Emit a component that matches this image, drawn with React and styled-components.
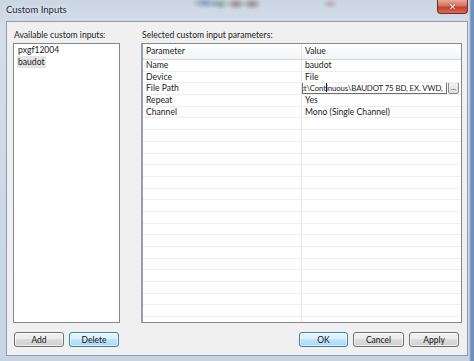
import React from 'react';
import styled, { createGlobalStyle } from 'styled-components';

const GlobalStyle = createGlobalStyle`
    html, body {
        margin: 0;
        padding: 0;
        background: #5a7fb5;
    }
    * {
        box-sizing: border-box;
    }
`;

const params = [
    { name: 'Name', value: 'baudot' },
    { name: 'Device', value: 'File' },
    { name: 'File Path', value: null },
    { name: 'Repeat', value: 'Yes' },
    { name: 'Channel', value: 'Mono (Single Channel)' },
];

const EMPTY_ROWS = 19;

// #region Styles

const Window = styled.div`
    width: 474px;
    height: 361px;
    padding: 0 6px 5px 6px;
    display: flex;
    flex-direction: column;
    font-family: Lato, "Open Sans", sans-serif;
    font-size: 8.6px;
    color: #1b1b1b;
    background:
        radial-gradient(ellipse 14px 6px at 205px 3px, rgba(60, 90, 140, 0.45), transparent),
        radial-gradient(ellipse 10px 6px at 220px 4px, rgba(60, 110, 80, 0.45), transparent),
        radial-gradient(ellipse 10px 6px at 236px 4px, rgba(110, 80, 60, 0.55), transparent),
        radial-gradient(ellipse 10px 6px at 252px 4px, rgba(110, 80, 60, 0.55), transparent),
        radial-gradient(ellipse 8px 5px at 330px 4px, rgba(150, 110, 120, 0.4), transparent),
        linear-gradient(90deg, transparent 469px, #6f90bf 471px),
        linear-gradient(180deg, #cbd6e3 0%, #d4dee9 8%, #c6d4e4 100%);
`;

const TitleBar = styled.div`
    height: 21px;
    flex: none;
    display: flex;
    align-items: flex-start;
    justify-content: space-between;
    .title {
        padding-top: 4px;
        font-size: 9.5px;
        color: #1e2b3a;
        text-shadow: 0 0 6px rgba(255, 255, 255, 0.9);
    }
`;

const CloseButton = styled.div`
    width: 31px;
    height: 14px;
    border: 1px solid #7a2a22;
    border-top: none;
    border-radius: 0 0 4px 4px;
    background: linear-gradient(180deg, #e9a99b 0%, #d7705e 45%, #c0422f 55%, #d86b4f 100%);
    display: flex;
    align-items: center;
    justify-content: center;
    color: #fff;
    font-size: 9px;
    font-weight: 700;
    font-family: "DejaVu Sans", sans-serif;
    text-shadow: 0 0 2px #5a1a10;
`;

const Client = styled.div`
    flex: 1;
    min-height: 0;
    background: #f0f0f0;
    border: 1px solid #8d9cb0;
    padding: 8px 5px 8px 6px;
    display: flex;
    gap: 21px;
`;

const Column = styled.div`
    display: flex;
    flex-direction: column;
    min-height: 0;
    width: ${(p) => p.$width || 'auto'};
    flex: ${(p) => (p.$grow ? 1 : 'none')};
`;

const Label = styled.div`
    height: 13px;
    line-height: 10px;
    padding-left: 1px;
`;

const ListBox = styled.div`
    flex: 1;
    min-height: 0;
    background: #fff;
    border: 1px solid #828790;
    padding: 0 3px;
`;

const ListItem = styled.div`
    height: 12px;
    line-height: 12px;
    padding: 0 1px;
    width: fit-content;
    background: ${(p) => (p.$selected ? '#e3e3e3' : 'transparent')};
`;

const ButtonRow = styled.div`
    display: flex;
    flex: none;
    gap: 5px;
    margin-top: 9px;
    justify-content: ${(p) => (p.$right ? 'flex-end' : 'flex-start')};
    padding: ${(p) => (p.$right ? '0 3px 0 0' : '0 0 0 1px')};
`;

const Button = styled.div`
    width: ${(p) => p.$width}px;
    height: 15px;
    border: 1px solid ${(p) => (p.$default ? '#3c7fb1' : '#707070')};
    border-radius: 3px;
    display: flex;
    align-items: center;
    justify-content: center;
    font-size: 8.5px;
    color: #111;
    box-shadow: inset 0 0 0 1px rgba(255, 255, 255, 0.65);
    background: ${(p) =>
        p.$default
            ? 'linear-gradient(180deg, #eaf6fd 0%, #d9f0fc 45%, #bee6fd 50%, #a7d9f5 100%)'
            : 'linear-gradient(180deg, #f2f2f2 0%, #ebebeb 45%, #dddddd 50%, #cfcfcf 100%)'};
`;

const Grid = styled.div`
    flex: 1;
    min-height: 0;
    background: #fff;
    border: 1px solid #828790;
    border-left: 2px solid #9a9ea5;
    overflow: hidden;
`;

const GridRow = styled.div`
    display: grid;
    grid-template-columns: 159px 1fr;
    height: ${(p) => (p.$header ? 16 : 11.7)}px;
    line-height: ${(p) => (p.$header ? 15 : 11)}px;
    border-bottom: 1px solid ${(p) => (p.$header ? '#d5d5d5' : '#eeeeee')};
    background: ${(p) => (p.$header ? 'linear-gradient(180deg, #ffffff 0%, #f3f4f6 100%)' : '#fff')};
`;

const Cell = styled.div`
    padding-left: 3px;
    white-space: nowrap;
    overflow: hidden;
    border-right: ${(p) => (p.$first ? '1px solid #e4e4e4' : 'none')};
`;

const EditBox = styled.div`
    display: flex;
    align-items: stretch;
    height: 12px;
    margin: -1px 2px 0 -3px;
    .field {
        flex: 1;
        min-width: 0;
        border: 1px solid #6e6e6e;
        background: #fff;
        overflow: hidden;
        white-space: nowrap;
        line-height: 10px;
        font-size: 7.8px;
        letter-spacing: -0.1px;
    }
    .text {
        display: inline-block;
        margin-left: -3px;
    }
    .caret {
        display: inline-block;
        width: 1px;
        height: 9px;
        background: #000;
        vertical-align: -1px;
        margin-right: -1px;
    }
`;

const DotsButton = styled.div`
    flex: none;
    width: 11px;
    margin-left: 1px;
    border: 1px solid #8b8b8b;
    border-radius: 2px;
    background: linear-gradient(180deg, #f2f2f2 0%, #dcdcdc 100%);
    font-size: 7px;
    line-height: 8px;
    text-align: center;
    color: #333;
`;

// #endregion

export default function App() {
    return (
        <>
            <GlobalStyle />
            <Window>
                <TitleBar>
                    <span className="title">Custom Inputs</span>
                    <CloseButton>✕</CloseButton>
                </TitleBar>
                <Client>
                    <Column $width="107px">
                        <Label>Available custom inputs:</Label>
                        <ListBox>
                            <ListItem>pxgf12004</ListItem>
                            <ListItem $selected>baudot</ListItem>
                        </ListBox>
                        <ButtonRow>
                            <Button $width={50}>Add</Button>
                            <Button $width={50} $default>Delete</Button>
                        </ButtonRow>
                    </Column>
                    <Column $grow>
                        <Label>Selected custom input parameters:</Label>
                        <Grid>
                            <GridRow $header>
                                <Cell $first>Parameter</Cell>
                                <Cell>Value</Cell>
                            </GridRow>
                            {params.map((p) => (
                                <GridRow key={p.name}>
                                    <Cell $first>{p.name}</Cell>
                                    {p.value !== null ? (
                                        <Cell>{p.value}</Cell>
                                    ) : (
                                        <Cell>
                                            <EditBox>
                                                <div className="field">
                                                    <span className="text">
                                                        xt\Cont<span className="caret" />inuous\BAUDOT 75 BD, EX. VWD,
                                                    </span>
                                                </div>
                                                <DotsButton>...</DotsButton>
                                            </EditBox>
                                        </Cell>
                                    )}
                                </GridRow>
                            ))}
                            {Array.from({ length: EMPTY_ROWS }).map((_, i) => (
                                <GridRow key={i}>
                                    <Cell $first />
                                    <Cell />
                                </GridRow>
                            ))}
                        </Grid>
                        <ButtonRow $right>
                            <Button $width={49} $default>OK</Button>
                            <Button $width={51}>Cancel</Button>
                            <Button $width={50}>Apply</Button>
                        </ButtonRow>
                    </Column>
                </Client>
            </Window>
        </>
    );
}
